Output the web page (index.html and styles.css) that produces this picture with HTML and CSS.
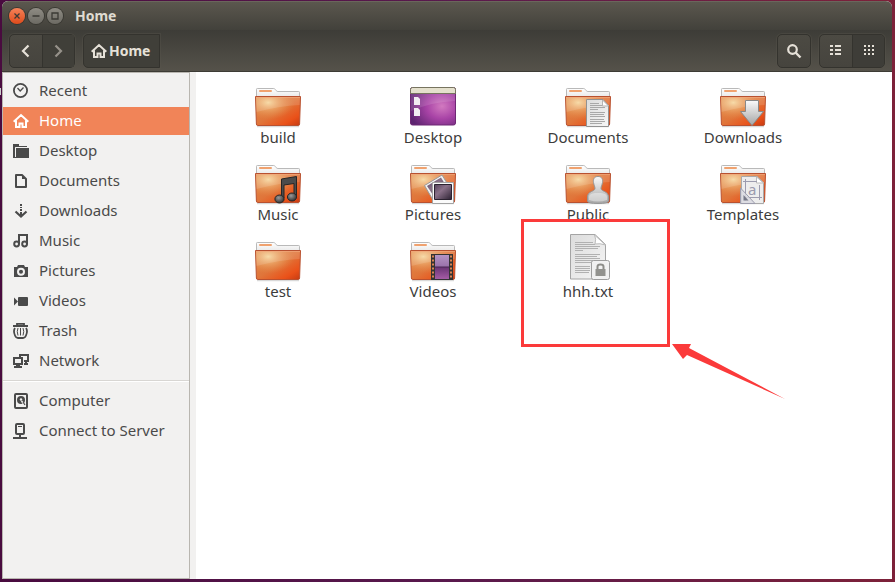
FILE: index.html
```html
<!DOCTYPE html>
<html lang="en">
<head>
<meta charset="utf-8">
<title>Home</title>
<link rel="stylesheet" href="styles.css">
</head>
<body>
<svg class="defs" aria-hidden="true">
  <defs>
    <linearGradient id="tab" x1="0" y1="0" x2="0" y2="1"><stop offset="0" stop-color="#fff"/><stop offset="1" stop-color="#e4e4e4"/></linearGradient>
    <linearGradient id="orange" x1="0" y1="0" x2="1" y2="1"><stop offset="0" stop-color="#e08a4a"/><stop offset=".5" stop-color="#e0753a"/><stop offset=".8" stop-color="#ea5119"/><stop offset="1" stop-color="#c53a12"/></linearGradient>
    <radialGradient id="glow" cx=".28" cy=".2" r=".6"><stop offset="0" stop-color="#f6d69c"/><stop offset="1" stop-color="#e8914c" stop-opacity="0"/></radialGradient>
    <linearGradient id="paper" x1="0" y1="0" x2="1" y2="1"><stop offset="0" stop-color="#dcdcdc"/><stop offset="1" stop-color="#f6f6f6"/></linearGradient>
    <linearGradient id="silver" x1="0" y1="0" x2="0" y2="1"><stop offset="0" stop-color="#fafafa"/><stop offset="1" stop-color="#a5a5a5"/></linearGradient>
    <radialGradient id="purple" cx=".7" cy=".5" r=".75"><stop offset="0" stop-color="#d27ac0"/><stop offset=".45" stop-color="#a843a6"/><stop offset="1" stop-color="#5d2470"/></radialGradient>
    <linearGradient id="photo" x1="0" y1="0" x2="1" y2="1"><stop offset="0" stop-color="#54425a"/><stop offset=".4" stop-color="#8a7189"/><stop offset="1" stop-color="#2d2233"/></linearGradient>
    <radialGradient id="note" cx=".4" cy=".35" r=".65"><stop offset="0" stop-color="#999"/><stop offset="1" stop-color="#333"/></radialGradient>
    <linearGradient id="film" x1="0" y1="0" x2="0" y2="1"><stop offset="0" stop-color="#b494c4"/><stop offset=".48" stop-color="#9a72ab"/><stop offset=".52" stop-color="#6b3576"/><stop offset="1" stop-color="#a55ca5"/></linearGradient>
    <symbol id="folder" viewBox="0 0 48 48">
      <path d="M3 46.5h42" stroke="#000" stroke-opacity=".15" stroke-width="1.5"/>
      <path d="M2.5 19V9.3q0-.8.8-.8h16.4q1 0 1.6 1l1 1.2q.5.8 1.6.8h20.8q.8 0 .8.8V19z" fill="url(#tab)" stroke="#b9b9b9"/>
      <rect x="5" y="10" width="13" height="2" rx="1" fill="#f0a26f"/>
      <path d="M1.5 16.5h45L45.6 44q-.1 1.5-1.4 1.5H3.8q-1.3 0-1.4-1.5z" fill="url(#orange)" stroke="#b85130"/>
      <path d="M2 17h44l-1 28H3z" fill="url(#glow)"/>
      <path d="M2 17h44l-.3 8Q25 26 2.4 32z" fill="#fff" opacity=".13"/>
      <path d="M2 17.5h44" stroke="#f1a77b" stroke-opacity=".7"/>
    </symbol>
    <symbol id="home" viewBox="0 0 16 16">
      <path d="M.7 8.8 8 2l7.3 6.8M3 7.5V14h3.5v-3.5h3V14H13V7.5" fill="none" stroke="currentColor" stroke-width="2"/>
    </symbol>
  </defs>
</svg>
<span class="launcher-mark"></span>
<div class="window">
  <header class="titlebar">
    <button class="dot close" aria-label="Close"><svg viewBox="0 0 16 16"><path d="m5.5 5.5 5 5m0-5-5 5"/></svg></button>
    <button class="dot" aria-label="Minimize"><svg viewBox="0 0 16 16"><path d="M4.5 8h7"/></svg></button>
    <button class="dot" aria-label="Maximize"><svg viewBox="0 0 16 16"><path d="M5 5h6v6H5z"/></svg></button>
    <h1>Home</h1>
  </header>
  <div class="toolbar">
    <div class="group">
      <button aria-label="Back"><svg viewBox="0 0 16 16"><path d="m10.5 2.5-5.5 5.500 5.500 5.500" fill="none" stroke="#e6e1d8" stroke-width="2.2"/></svg></button>
      <button class="off" aria-label="Forward"><svg viewBox="0 0 16 16"><path d="m5.500 2.500 5.500 5.500-5.500 5.500" fill="none" stroke="#96928a" stroke-width="2.2"/></svg></button>
    </div>
    <button class="path"><svg viewBox="0 0 16 16"><use href="#home"/></svg>Home</button>
    <span class="spacer"></span>
    <div class="group single">
      <button aria-label="Search"><svg viewBox="0 0 16 16"><circle cx="6.5" cy="6.5" r="4.3" fill="none" stroke="currentColor" stroke-width="2.2"/><path d="m9.5 9.5 5 5" stroke="currentColor" stroke-width="2.4"/></svg></button>
    </div>
    <div class="group">
      <button aria-label="List view"><svg viewBox="0 0 16 16"><path d="M2 2h3v2H2zm5 0h6v2H7zM2 6h3v2H2zm5 0h6v2H7zm-5 4h3v2H2zm5 0h6v2H7z" fill="currentColor"/></svg></button>
      <button class="on" aria-label="Grid view"><svg viewBox="0 0 16 16"><path d="M4 2h2v2H4zm4 0h2v2H8zm4 0h2v2h-2zM4 6h2v2H4zm4 0h2v2H8zm4 0h2v2h-2zm-8 4h2v2H4zm4 0h2v2H8zm4 0h2v2h-2z" fill="currentColor"/></svg></button>
    </div>
  </div>
  <div class="content">
    <nav class="sidebar" aria-label="Places">
      <a href="#recent"><svg viewBox="0 0 16 16"><circle cx="7.500" cy="7.5" r="6.6" fill="none" stroke="currentColor" stroke-width="1.8"/><path d="m4.500 5 2.7 3L10.500 4.5" fill="none" stroke="currentColor" stroke-width="1.3"/></svg>Recent</a>
      <a href="#home-folder" class="current" aria-current="page"><svg viewBox="0 0 16 16"><use href="#home"/></svg>Home</a>
      <a href="#desktop"><svg viewBox="0 0 16 16"><path d="M0 1h6v2h8v1.5H2V14H0zM3 5h13v10H3z" fill="currentColor"/><path d="M2.5 14V4.5H14" fill="none" stroke="#f2f1f0"/><path d="M0 14h3v1H0z" fill="currentColor"/></svg>Desktop</a>
      <a href="#documents"><svg viewBox="0 0 16 16"><path d="M3 2h6l4 4v8H3z" fill="none" stroke="currentColor" stroke-width="2" stroke-linejoin="round"/><path d="M9 2v4h4z" fill="currentColor"/></svg>Documents</a>
      <a href="#downloads"><svg viewBox="0 0 16 16"><path d="M7 1h2v2H7zm0 3h2v1H7zm0 2h2v2H7zm0 3h2v4H7z" fill="currentColor"/><path d="m2.5 8.5 5.5 5 5.5-5" fill="none" stroke="currentColor" stroke-width="2.2"/></svg>Downloads</a>
      <a href="#music"><svg viewBox="0 0 16 16"><path d="M6 11V2h8v9" fill="none" stroke="currentColor" stroke-width="2"/><circle cx="3.6" cy="11" r="2.4" fill="none" stroke="currentColor" stroke-width="2"/><circle cx="11.6" cy="11" r="2.4" fill="none" stroke="currentColor" stroke-width="2"/></svg>Music</a>
      <a href="#pictures"><svg viewBox="0 0 16 16"><path d="M1 4h3l1-2h6l1 2h3v10H1z" fill="currentColor"/><circle cx="8" cy="8.8" r="3" fill="none" stroke="#f2f1f0" stroke-width="2"/></svg>Pictures</a>
      <a href="#videos"><svg viewBox="0 0 16 16"><rect x="5" y="4" width="10" height="9" rx="1" fill="currentColor"/><path d="m1 4.500 4 4-4 4z" fill="currentColor"/></svg>Videos</a>
      <a href="#trash"><svg viewBox="0 0 16 16"><path d="M4 2V.8h7V2M0 3h15" fill="none" stroke="currentColor" stroke-width="1.8"/><path d="M2 5q-2 3 0 7.500Q3 15 5 15h5q2 0 3-2.500Q15 8 13 5" fill="none" stroke="currentColor" stroke-width="1.8"/><path d="M5 5q-1.500 3.500 0 7.500M7.500 5v7.500M10 5q1.500 3.500 0 7.500" fill="none" stroke="currentColor"/></svg>Trash</a>
      <a href="#network"><svg viewBox="0 0 16 16"><path d="M7 4V2h8v6h-4" fill="none" stroke="currentColor" stroke-width="2"/><path d="M1 5h8v6H1z" fill="none" stroke="currentColor" stroke-width="2"/><path d="M3 11h4v2h2v2H1v-2h2zm9-2h2v1h1v2h-4v-2h1z" fill="currentColor"/></svg>Network</a>
      <hr>
      <a href="#computer"><svg viewBox="0 0 16 16"><rect x="2" y="1" width="12" height="14" rx="1" fill="none" stroke="currentColor" stroke-width="2"/><circle cx="8" cy="7" r="4" fill="currentColor"/><circle cx="8" cy="6.500" r="1.200" fill="#f2f1f0"/><path d="m8.500 8 3 4" stroke="#f2f1f0" stroke-width="1.500"/><path d="m10 9 2 3" stroke="currentColor" stroke-width="1.200"/></svg>Computer</a>
      <a href="#server"><svg viewBox="0 0 16 16"><rect x="3" y="1" width="8" height="10" rx="1" fill="none" stroke="currentColor" stroke-width="2"/><path d="M5 3.500h4" stroke="currentColor"/><path d="M6 11h2v3H6zM0 14h14v2H0z" fill="currentColor"/></svg>Connect to Server</a>
    </nav>
    <main class="files">
      <figure><svg viewBox="0 0 48 48"><use href="#folder"/></svg><figcaption>build</figcaption></figure>
      <figure><svg viewBox="0 0 48 48">
        <rect x="1.500" y="7.500" width="45" height="37.500" rx="2" fill="url(#purple)" stroke="#6f2875"/>
        <path d="M2 14h44v7Q22 22 2 31z" fill="#fff" opacity=".12"/>
        <path d="M1.500 13.500v-4q0-2 2-2h41q2 0 2 2v4z" fill="#e4e0cc" stroke="#77745f"/>
        <path d="M5 17h4l2 2v6H5zm0 11h4l2 2v6H5z" fill="#f2edf2"/>
      </svg><figcaption>Desktop</figcaption></figure>
      <figure><svg viewBox="0 0 48 48"><use href="#folder"/>
        <path d="M22.500 19.500H39l5.500 6v21h-22z" fill="url(#paper)" stroke="#929292"/><path d="M38.500 20v6h6z" fill="#fff" stroke="#b5b5b5"/>
        <path d="M26 23.500h9m-9 2h12m-12 2h15m-15 2h8m-8 3h15m-15 2h14m-14 2h15m-15 3h14m-14 2h15m-15 2h12" stroke="#a8a8a8"/>
      </svg><figcaption>Documents</figcaption></figure>
      <figure><svg viewBox="0 0 48 48"><use href="#folder"/>
        <path d="M26.500 20.500h13v11h5L33 45.500l-11.500-14h5z" fill="url(#silver)" stroke="#888"/>
      </svg><figcaption>Downloads</figcaption></figure>
      <figure><svg viewBox="0 0 48 48"><use href="#folder"/>
        <path d="M27.500 41V22l15-2.500V40h-2.500V26.500L30 28v13z" fill="#4b4b4b" stroke="#262626"/>
        <ellipse cx="25.500" cy="42" rx="4.600" ry="4" fill="url(#note)" stroke="#262626"/><ellipse cx="38" cy="40" rx="4.600" ry="4" fill="url(#note)" stroke="#262626"/>
      </svg><figcaption>Music</figcaption></figure>
      <figure><svg viewBox="0 0 48 48"><use href="#folder"/>
        <path d="M15.500 28.500 33 18l8 13-17 12z" fill="#f2f2f2" stroke="#999"/><path d="m18 29 14-8.500 6 10-13 9z" fill="url(#photo)"/>
        <path d="M23.500 25.500h21v21h-21z" fill="#fafafa" stroke="#a3a3a3"/><path d="M25.500 27.500h17v15h-17z" fill="url(#photo)" stroke="#2b2230"/>
      </svg><figcaption>Pictures</figcaption></figure>
      <figure><svg viewBox="0 0 48 48"><use href="#folder"/>
        <path d="M34 19.500c4 0 5 3 4.500 6-.4 2.500-1.500 4-1.500 6 0 3 7.500 2.500 7.500 8.500v4q0 2.500-10.500 2.500t-10.500-2.500v-4c0-6 7.500-5.500 7.500-8.500 0-2-1.100-3.500-1.500-6-.5-3 .5-6 4.500-6z" fill="url(#silver)" stroke="#969696"/>
        <path d="M25 40c0-4 6-4 9-4s9 0 9 4v3q-9 3-18 0z" fill="#fff" opacity=".4"/>
      </svg><figcaption>Public</figcaption></figure>
      <figure><svg viewBox="0 0 48 48"><use href="#folder"/>
        <path d="M22.500 19.500H38l6.500 6v21h-22z" fill="#ededed" stroke="#a9a9a9"/><path d="M37.500 20v6h7z" fill="#fff" stroke="#bbb"/>
        <path d="M24 24.500h14M26.500 22v22m14-16v15M27 40.500h16" stroke="#9c9caf"/>
        <text class="glyph" x="29" y="38">a</text>
        <path d="M21.500 31v15.500H36z" fill="#d9d9e0" fill-opacity=".85" stroke="#9c9cac"/><path d="M24.500 38v5.500h5z" fill="#777988"/>
      </svg><figcaption>Templates</figcaption></figure>
      <figure><svg viewBox="0 0 48 48"><use href="#folder"/></svg><figcaption>test</figcaption></figure>
      <figure><svg viewBox="0 0 48 48"><use href="#folder"/>
        <path d="M22 20h22v26H22z" fill="#333"/><path d="M26 21h14v24H26z" fill="url(#film)"/><path d="M26 33h14" stroke="#4b2855"/>
        <path d="M24 21.500V45M42 21.500V45" stroke="#da8453" stroke-width="2" stroke-dasharray="2 2"/>
      </svg><figcaption>Videos</figcaption></figure>
      <figure class="marked"><svg viewBox="0 0 48 48">
        <path d="M6.500.5H31l10.500 10v34.500h-35z" fill="url(#paper)" stroke="#a4a4a4"/><path d="M30.500 1q2 4 .5 9 5-1 10.500 1z" fill="#fff" stroke="#bbb"/>
        <path d="M11 8.500h18m-18 2h20m-20 2h25m-25 2h23m-23 2h8m-8 4h25m-25 2h22m-22 2h25m-25 2h22m-22 2h20m-20 4h15m-15 2h15m-15 2h15m-15 2h14" stroke="#b1b1b1"/>
        <rect x="27.500" y="26.500" width="18" height="19" rx="2" fill="#f1f1f1" stroke="#9e9e9e"/>
        <path d="M33.500 36v-3.500q0-2 3-2t3 2V36" fill="none" stroke="#8d8d89" stroke-width="2"/><path d="M31.500 35h10v7h-10z" fill="#92928e"/>
      </svg><figcaption>hhh.txt</figcaption>
        <span class="callout"></span>
        <svg class="arrow" viewBox="0 0 114 57"><path d="M0 1h19l-2 4 96 51L15 12l-4 4z" fill="#fb3a3a"/></svg>
      </figure>
    </main>
  </div>
</div>
</body>
</html>
```
FILE: styles.css
```css
* { box-sizing: border-box; }
body {
  margin: 0;
  height: 100vh;
  padding: 1px 3px 3px 2px;
  overflow: hidden;
  background: linear-gradient(to right, #490b3f, #59194d 50%, #7d2139);
  color: #3c3c3c;
  font: 15px/18px "Noto Sans", sans-serif;
}
.defs { position: absolute; width: 0; height: 0; }
.launcher-mark { position: absolute; left: 0; top: 88px; width: 1px; height: 7px; background: #ccc; }
.window {
  height: 100%;
  display: flex;
  flex-direction: column;
  border-radius: 6px 6px 0 0;
  overflow: hidden;
  background: #fff;
}
button { font: inherit; color: inherit; padding: 0; border: 0; background: none; }
.titlebar {
  display: flex;
  align-items: center;
  gap: 3px;
  height: 29px;
  flex: none;
  padding: 0 7px;
  border-top: 1px solid #6a665c;
  background: linear-gradient(#5b574e, #42413b);
  color: #dfdbd2;
}
.titlebar h1 { margin: 0 0 0 9px; font-size: 14px; line-height: 20px; }
.dot {
  width: 16px;
  height: 16px;
  border-radius: 50%;
  background: linear-gradient(#8f8c84, #6c6a63);
  box-shadow: 0 0 0 1px #393832;
}
.dot svg { display: block; width: 16px; height: 16px; fill: none; stroke: #3b3a35; stroke-width: 1.3; }
.dot.close { background: linear-gradient(#f58259, #df4b1b); }
.toolbar {
  display: flex;
  align-items: center;
  gap: 8px;
  height: 42px;
  flex: none;
  padding: 0 7px;
  border-bottom: 1px solid #3d3b35;
  background: linear-gradient(#3d3c37, #55524a);
  color: #e6e1d8;
}
.group, .path {
  display: flex;
  height: 34px;
  border: 1px solid #34332e;
  border-radius: 5px;
  background: linear-gradient(#4c4a43, #46443e);
  box-shadow: 0 0 0 1px #5a574e55;
}
.group { width: 66px; }
.group.single { width: 34px; }
.group button { flex: 1; display: grid; place-items: center; }
.group button + button { border-left: 1px solid #34332e; }
.toolbar svg { width: 16px; height: 16px; }
.group .off { background: #403f39; }
.group .on { background: #3e3d38; border-radius: 0 4px 4px 0; }
.path {
  align-items: center;
  gap: 2px;
  padding: 0 9px 0 7px;
  border-radius: 5px 0 0 5px;
  background: #403f39;
  font-size: 14px;
  font-weight: bold;
}
.spacer { flex: 1; }
.content { flex: 1; display: flex; min-height: 0; }
.sidebar {
  flex: none;
  width: 188px;
  padding-top: 4px;
  display: flex;
  flex-direction: column;
  gap: 2px;
  border: 1px solid #b9b6b0;
  background: #f2f1f0;
}
.sidebar a {
  display: flex;
  align-items: flex-start;
  gap: 10px;
  height: 28px;
  padding-left: 10px;
  color: #4a4a4a;
  line-height: 26px;
  text-decoration: none;
}
.sidebar svg { width: 16px; height: 16px; margin-top: 6px; }
.sidebar .current { background: #f18458; color: #fff; }
.sidebar hr { width: 100%; height: 2px; margin: 3px 0; border: 0; border-top: 1px solid #d8d6d3; background: #fff; }
.files {
  flex: 1;
  display: grid;
  grid-template-columns: repeat(auto-fill, 155px);
  grid-auto-rows: 68px;
  gap: 9px 0;
  align-content: start;
  padding: 8px 0 0 5px;
  border-left: 6px solid #f2f1f0;
}
figure {
  position: relative;
  margin: 0;
  width: 154px;
  display: flex;
  flex-direction: column;
  align-items: center;
}
figure > svg { width: 48px; height: 48px; flex: none; }
.glyph { font: 15px "Noto Sans", sans-serif; fill: #9a9aae; }
.callout { position: absolute; left: 10px; top: -15px; width: 149px; height: 128px; border: 3px solid #fb3a3a; }
figure > .arrow { position: absolute; left: 161px; top: 109px; width: 114px; height: 57px; }
```
